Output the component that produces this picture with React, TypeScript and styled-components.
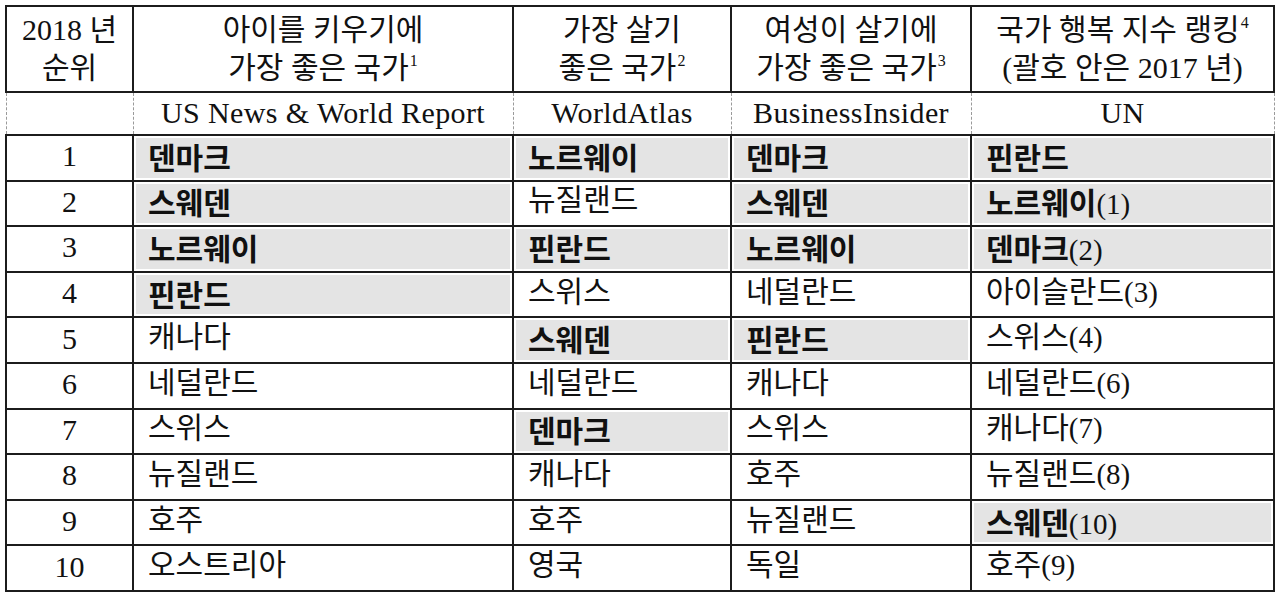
import React from 'react';
import styled, { createGlobalStyle } from 'styled-components';

const GlobalStyle = createGlobalStyle`
  body {
    margin: 0;
    background: #ffffff;
    color: #111111;
    font-family: "Liberation Serif", "Noto Sans CJK KR", serif;
  }
`;

const Page = styled.div`
  padding: 5px 0 0 5px;
`;

const Table = styled.table`
  width: 1268px;
  table-layout: fixed;
  border-collapse: collapse;
  font-family: "Liberation Serif", "Noto Sans CJK KR", serif;
`;

const line = '2px solid #1c1c1c';

const HeadRow = styled.tr`
  height: 86px;
`;

const SourceRow = styled.tr`
  height: 43px;
`;

const DataRow = styled.tr`
  height: 45.6px;
`;

const HeadCell = styled.th`
  padding: 0;
  border: ${line};
  font-weight: 400;
  font-size: 30px;
  line-height: 38px;
  text-align: center;
  vertical-align: middle;
  white-space: nowrap;
`;

const Sup = styled.span`
  display: inline-block;
  font-family: "Liberation Serif", serif;
  font-size: 16px;
  line-height: 16px;
  vertical-align: top;
  margin: 4px 0 0 1px;
`;

const SourceCell = styled.td`
  padding: 0 0 2px;
  border-top: ${line};
  border-bottom: ${line};
  border-left: 1px dashed #9a9a9a;
  border-right: 1px dashed #9a9a9a;
  font-size: 30px;
  line-height: 24px;
  letter-spacing: 0.4px;
  text-align: center;
  vertical-align: middle;
`;

const RankCell = styled.td`
  padding: 0 0 3px;
  border: ${line};
  font-size: 30px;
  line-height: 24px;
  text-align: center;
  vertical-align: middle;
`;

const NameCell = styled.td<{ $hl?: boolean }>`
  padding: ${({ $hl }) => ($hl ? '2px 0 0 14px' : '0 0 6px 14px')};
  border: ${line};
  background: ${({ $hl }) => ($hl ? '#e4e4e4' : '#ffffff')};
  box-shadow: ${({ $hl }) => ($hl ? 'inset 0 0 0 2px #ffffff' : 'none')};
  font-size: 30px;
  line-height: 24px;
  font-weight: ${({ $hl }) => ($hl ? 700 : 400)};
  text-align: left;
  vertical-align: middle;
  white-space: nowrap;
`;

const Prev = styled.span`
  font-family: "Liberation Serif", serif;
  font-weight: 400;
  font-size: 29px;
`;

type Entry = { name: string; hl?: boolean; prev?: string };

const rows: Entry[][] = [
  [{ name: '덴마크', hl: true }, { name: '노르웨이', hl: true }, { name: '덴마크', hl: true }, { name: '핀란드', hl: true }],
  [{ name: '스웨덴', hl: true }, { name: '뉴질랜드' }, { name: '스웨덴', hl: true }, { name: '노르웨이', hl: true, prev: '1' }],
  [{ name: '노르웨이', hl: true }, { name: '핀란드', hl: true }, { name: '노르웨이', hl: true }, { name: '덴마크', hl: true, prev: '2' }],
  [{ name: '핀란드', hl: true }, { name: '스위스' }, { name: '네덜란드' }, { name: '아이슬란드', prev: '3' }],
  [{ name: '캐나다' }, { name: '스웨덴', hl: true }, { name: '핀란드', hl: true }, { name: '스위스', prev: '4' }],
  [{ name: '네덜란드' }, { name: '네덜란드' }, { name: '캐나다' }, { name: '네덜란드', prev: '6' }],
  [{ name: '스위스' }, { name: '덴마크', hl: true }, { name: '스위스' }, { name: '캐나다', prev: '7' }],
  [{ name: '뉴질랜드' }, { name: '캐나다' }, { name: '호주' }, { name: '뉴질랜드', prev: '8' }],
  [{ name: '호주' }, { name: '호주' }, { name: '뉴질랜드' }, { name: '스웨덴', hl: true, prev: '10' }],
  [{ name: '오스트리아' }, { name: '영국' }, { name: '독일' }, { name: '호주', prev: '9' }],
];

const widths = [127, 380, 218, 240, 303];

export default function App() {
  return (
    <Page>
      <GlobalStyle />
      <Table>
        <colgroup>
          {widths.map((w, i) => (
            <col key={i} style={{ width: w }} />
          ))}
        </colgroup>
        <thead>
          <HeadRow>
            <HeadCell>
              2018 년<br />순위
            </HeadCell>
            <HeadCell>
              아이를 키우기에<br />가장 좋은 국가<Sup>1</Sup>
            </HeadCell>
            <HeadCell>
              가장 살기<br />좋은 국가<Sup>2</Sup>
            </HeadCell>
            <HeadCell>
              여성이 살기에<br />가장 좋은 국가<Sup>3</Sup>
            </HeadCell>
            <HeadCell>
              국가 행복 지수 랭킹<Sup>4</Sup>
              <br />(괄호 안은 2017 년)
            </HeadCell>
          </HeadRow>
          <SourceRow>
            <SourceCell />
            <SourceCell>US News &amp; World Report</SourceCell>
            <SourceCell>WorldAtlas</SourceCell>
            <SourceCell>BusinessInsider</SourceCell>
            <SourceCell>UN</SourceCell>
          </SourceRow>
        </thead>
        <tbody>
          {rows.map((cells, r) => (
            <DataRow key={r}>
              <RankCell>{r + 1}</RankCell>
              {cells.map((c, i) => (
                <NameCell key={i} $hl={c.hl}>
                  {c.name}
                  {c.prev && <Prev>({c.prev})</Prev>}
                </NameCell>
              ))}
            </DataRow>
          ))}
        </tbody>
      </Table>
    </Page>
  );
}
